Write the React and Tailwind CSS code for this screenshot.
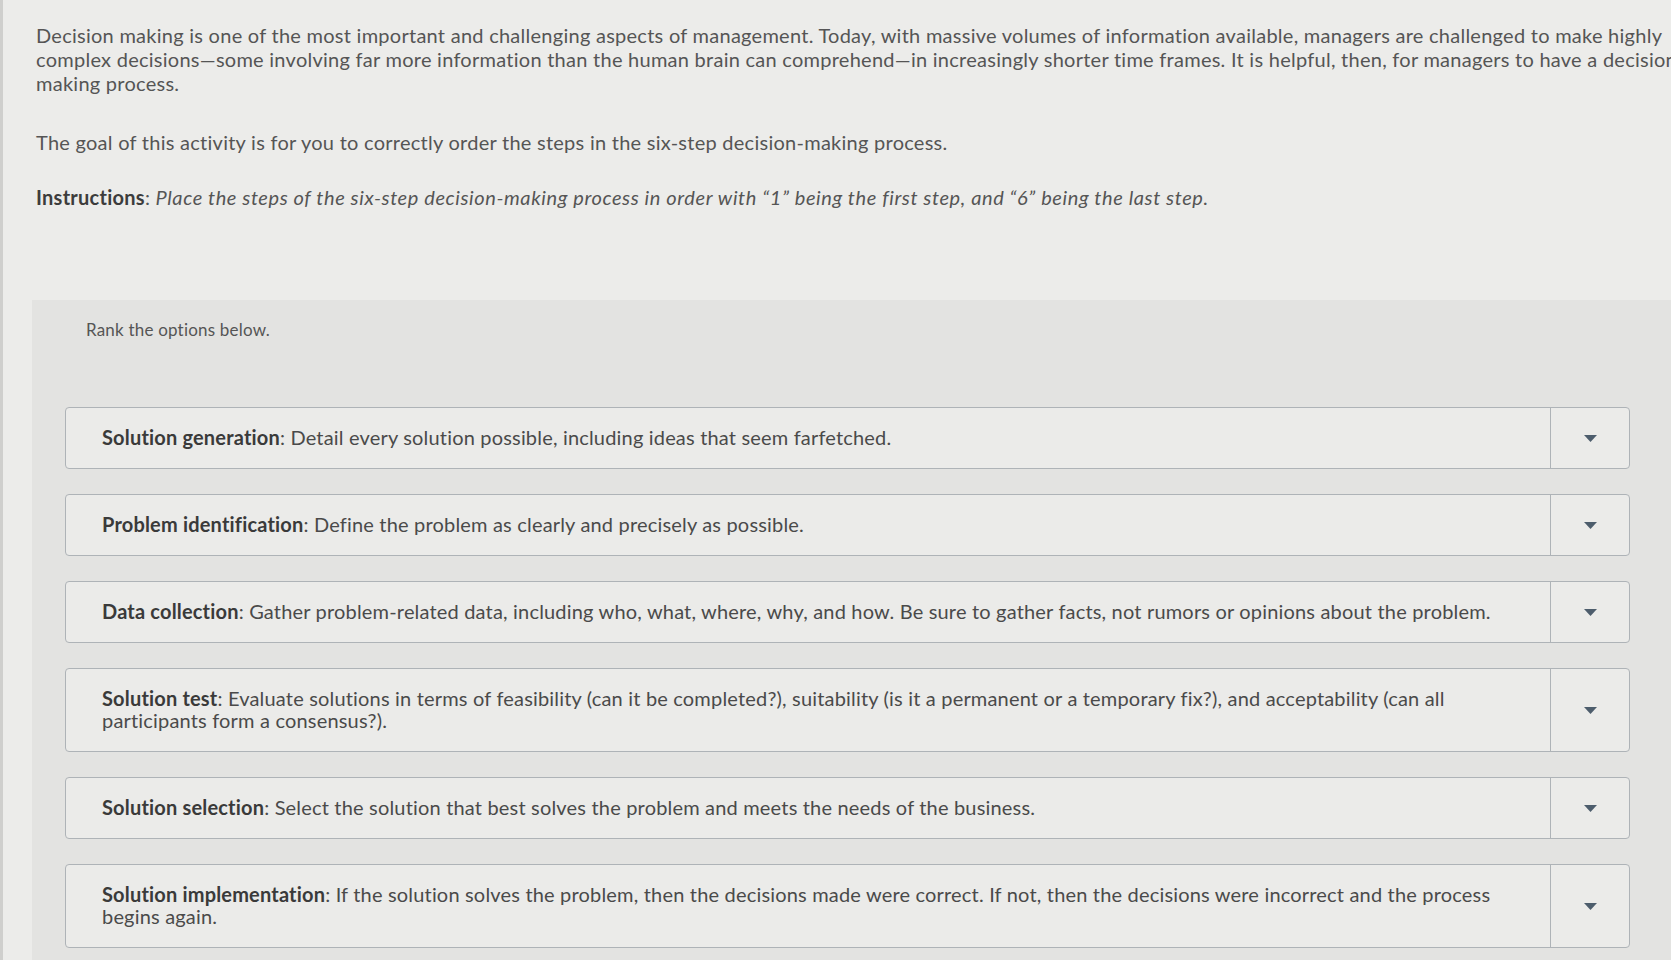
import React from "react";

const rows = [
  { label: "Solution generation", lines: ["Detail every solution possible, including ideas that seem farfetched."] },
  { label: "Problem identification", lines: ["Define the problem as clearly and precisely as possible."] },
  { label: "Data collection", lines: ["Gather problem-related data, including who, what, where, why, and how. Be sure to gather facts, not rumors or opinions about the problem."] },
  { label: "Solution test", lines: ["Evaluate solutions in terms of feasibility (can it be completed?), suitability (is it a permanent or a temporary fix?), and acceptability (can all", "participants form a consensus?)."] },
  { label: "Solution selection", lines: ["Select the solution that best solves the problem and meets the needs of the business."] },
  { label: "Solution implementation", lines: ["If the solution solves the problem, then the decisions made were correct. If not, then the decisions were incorrect and the process", "begins again."] },
];

function Arrow() {
  return (
    <svg width="13" height="7" viewBox="0 0 13 7" aria-hidden="true">
      <path d="M0 0 H13 L6.5 7 Z" fill="#4d5d6c" />
    </svg>
  );
}

function Row({ label, lines }) {
  return (
    <div className="flex rounded-[4px] border border-[#aeb3b7] bg-[#ebebe9]">
      <div className="flex-1 pl-[36px] pr-[30px] pt-[18px] pb-[20px] text-[20px] leading-[22px] tracking-[0.18px] text-[#4a4a4a]">
        {lines.map((l, i) => (
          <div key={i} className="whitespace-nowrap">
            {i === 0 && (
              <>
                <span className="font-bold text-[#3a3a3a]">{label}</span>:{" "}
              </>
            )}
            {l}
          </div>
        ))}
      </div>
      <div className="flex w-[79px] shrink-0 items-center justify-center border-l border-[#aeb3b7]">
        <Arrow />
      </div>
    </div>
  );
}

export default function App() {
  return (
    <div
      className="min-h-screen w-full overflow-hidden bg-[#ececea] border-l-[3px] border-[#cfcfcd]"
      style={{ fontFamily: "Lato, 'Open Sans', Arial, sans-serif" }}
    >
      <div className="pl-[33px] pt-[23px] text-[20px] leading-[24px] tracking-[0.26px] text-[#555555]">
        <div className="whitespace-nowrap">
          Decision making is one of the most important and challenging aspects of management. Today, with massive volumes of information available, managers are challenged to make highly
        </div>
        <div className="whitespace-nowrap">
          complex decisions—some involving far more information than the human brain can comprehend—in increasingly shorter time frames. It is helpful, then, for managers to have a decision-
        </div>
        <div className="whitespace-nowrap">making process.</div>
        <p className="mt-[35px] whitespace-nowrap">
          The goal of this activity is for you to correctly order the steps in the six-step decision-making process.
        </p>
        <p className="mt-[31px] whitespace-nowrap">
          <span className="font-bold text-[#3c3c3c]">Instructions</span>:{" "}
          <em className="tracking-[0.6px]">Place the steps of the six-step decision-making process in order with “1” being the first step, and “6” being the last step.</em>
        </p>
      </div>

      <div className="ml-[29px] mt-[91px] bg-[#e3e3e1] pl-[33px] pr-[41px] pt-[20px] pb-[40px]">
        <div className="pl-[21px] text-[17px] leading-[20px] tracking-[0.2px] text-[#555555]">Rank the options below.</div>
        <div className="mt-[67px] flex flex-col gap-[25px]">
          {rows.map((r) => (
            <Row key={r.label} {...r} />
          ))}
        </div>
      </div>
    </div>
  );
}
